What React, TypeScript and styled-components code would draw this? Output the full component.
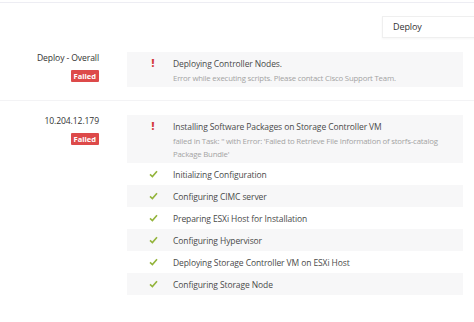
import styled, { createGlobalStyle } from 'styled-components'

const GlobalStyle = createGlobalStyle`
  body {
    margin: 0;
    background: #fff;
    font-family: "Open Sans", "Liberation Sans", sans-serif;
    overflow: hidden;
  }
`

const Page = styled.div`
  width: 474px;
  overflow: hidden;
`

const TopRule = styled.div`
  height: 2px;
  border-bottom: 1px solid #ededf3;
`

const Toolbar = styled.div`
  display: flex;
  justify-content: flex-end;
  padding-top: 13px;
  margin-right: -20px;
`

const Select = styled.div`
  width: 100px;
  height: 20px;
  border: 1px solid #efefef;
  box-shadow: 0 1px 2px rgba(0, 0, 0, 0.04);
  padding-left: 10px;
  font-size: 9px;
  letter-spacing: -0.1px;
  line-height: 20px;
  color: #333;
`

const Section = styled.section<{ $last?: boolean }>`
  display: grid;
  grid-template-columns: 99px 336px;
  column-gap: 28px;
  padding: 14px 0 13px;
  border-bottom: ${({ $last }) => ($last ? 'none' : '1px solid #f3f3f5')};
`

const LabelCol = styled.div`
  display: flex;
  flex-direction: column;
  align-items: flex-end;
`

const Label = styled.div`
  font-size: 8.6px;
  letter-spacing: -0.1px;
  line-height: 12px;
  color: #333;
`

const Badge = styled.span`
  margin-top: 6px;
  background: #dd4a4a;
  color: #fff;
  font-size: 7.5px;
  font-weight: 700;
  line-height: 12px;
  padding: 0 3px;
  border-radius: 1px;
`

const Steps = styled.div`
  display: flex;
  flex-direction: column;
`

const Step = styled.div<{ $shaded: boolean; $detail?: boolean }>`
  display: grid;
  grid-template-columns: 46px 1fr;
  align-items: ${({ $detail }) => ($detail ? 'start' : 'center')};
  min-height: 22px;
  padding: ${({ $detail }) => ($detail ? '5px 12px 2px 0' : '0 12px 0 0')};
  box-sizing: border-box;
  background: ${({ $shaded }) => ($shaded ? '#f7f7f8' : '#fff')};
`

const IconCell = styled.div`
  display: flex;
  justify-content: center;
  padding-left: 6px;
  height: 13px;
  align-items: center;
`

const Bang = styled.span`
  color: #d33a3d;
  font-weight: 800;
  font-size: 10px;
  line-height: 13px;
`

const Title = styled.div`
  font-size: 8.5px;
  letter-spacing: -0.1px;
  line-height: 13px;
  color: #4a4a4a;
`

const Detail = styled.div`
  margin-top: 2px;
  font-size: 7.8px;
  letter-spacing: -0.2px;
  line-height: 13px;
  color: #a3a3a3;
`

const Check = () => (
  <svg width="9" height="8" viewBox="0 0 9 8">
    <path d="M1 4.4 L3.4 6.6 L8 1.2" fill="none" stroke="#93b43b" strokeWidth="1.6" />
  </svg>
)

type StepData = { title: string; failed?: boolean; detail?: string }

const deploySteps: StepData[] = [
  {
    title: 'Deploying Controller Nodes.',
    failed: true,
    detail: 'Error while executing scripts. Please contact Cisco Support Team.',
  },
]

const hostSteps: StepData[] = [
  {
    title: 'Installing Software Packages on Storage Controller VM',
    failed: true,
    detail:
      "failed in Task: '' with Error: 'Failed to Retrieve File Information of storfs-catalog Package Bundle'",
  },
  { title: 'Initializing Configuration' },
  { title: 'Configuring CIMC server' },
  { title: 'Preparing ESXi Host for Installation' },
  { title: 'Configuring Hypervisor' },
  { title: 'Deploying Storage Controller VM on ESXi Host' },
  { title: 'Configuring Storage Node' },
]

function StepList({ steps }: { steps: StepData[] }) {
  return (
    <Steps>
      {steps.map((s, i) => (
        <Step key={s.title} $shaded={i % 2 === 0} $detail={!!s.detail}>
          <IconCell>{s.failed ? <Bang>!</Bang> : <Check />}</IconCell>
          <div>
            <Title>{s.title}</Title>
            {s.detail && <Detail>{s.detail}</Detail>}
          </div>
        </Step>
      ))}
    </Steps>
  )
}

export default function App() {
  return (
    <Page>
      <GlobalStyle />
      <TopRule />
      <Toolbar>
        <Select>Deploy</Select>
      </Toolbar>
      <Section>
        <LabelCol>
          <Label>Deploy - Overall</Label>
          <Badge>Failed</Badge>
        </LabelCol>
        <StepList steps={deploySteps} />
      </Section>
      <Section $last>
        <LabelCol>
          <Label>10.204.12.179</Label>
          <Badge>Failed</Badge>
        </LabelCol>
        <StepList steps={hostSteps} />
      </Section>
    </Page>
  )
}
